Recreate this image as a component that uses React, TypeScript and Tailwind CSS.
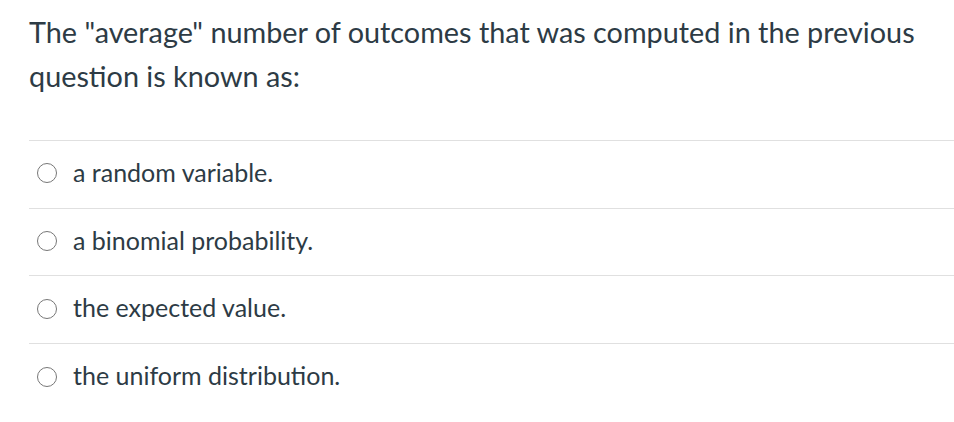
const options = [
  'a random variable.',
  'a binomial probability.',
  'the expected value.',
  'the uniform distribution.',
];

export default function App() {
  return (
    <div className="min-h-screen bg-white pl-[29px] text-[#2d3b45] font-['Lato',sans-serif]">
      <p className="pt-[10px] text-[28.8px] leading-[44px]">
        The "average" number of outcomes that was computed in the previous question is known as:
      </p>
      <div className="mt-[42px] border-t border-[#e0e0e0]">
        {options.map((opt) => (
          <label key={opt} className="flex h-[67.7px] items-center border-b border-[#e0e0e0] last:border-b-0">
            <span className="ml-[8px] mb-[2px] h-[20px] w-[20px] shrink-0 rounded-full border-[1.5px] border-[#777777]" />
            <span className="ml-[16px] mb-[4px] text-[25px] leading-none">{opt}</span>
          </label>
        ))}
      </div>
    </div>
  );
}
